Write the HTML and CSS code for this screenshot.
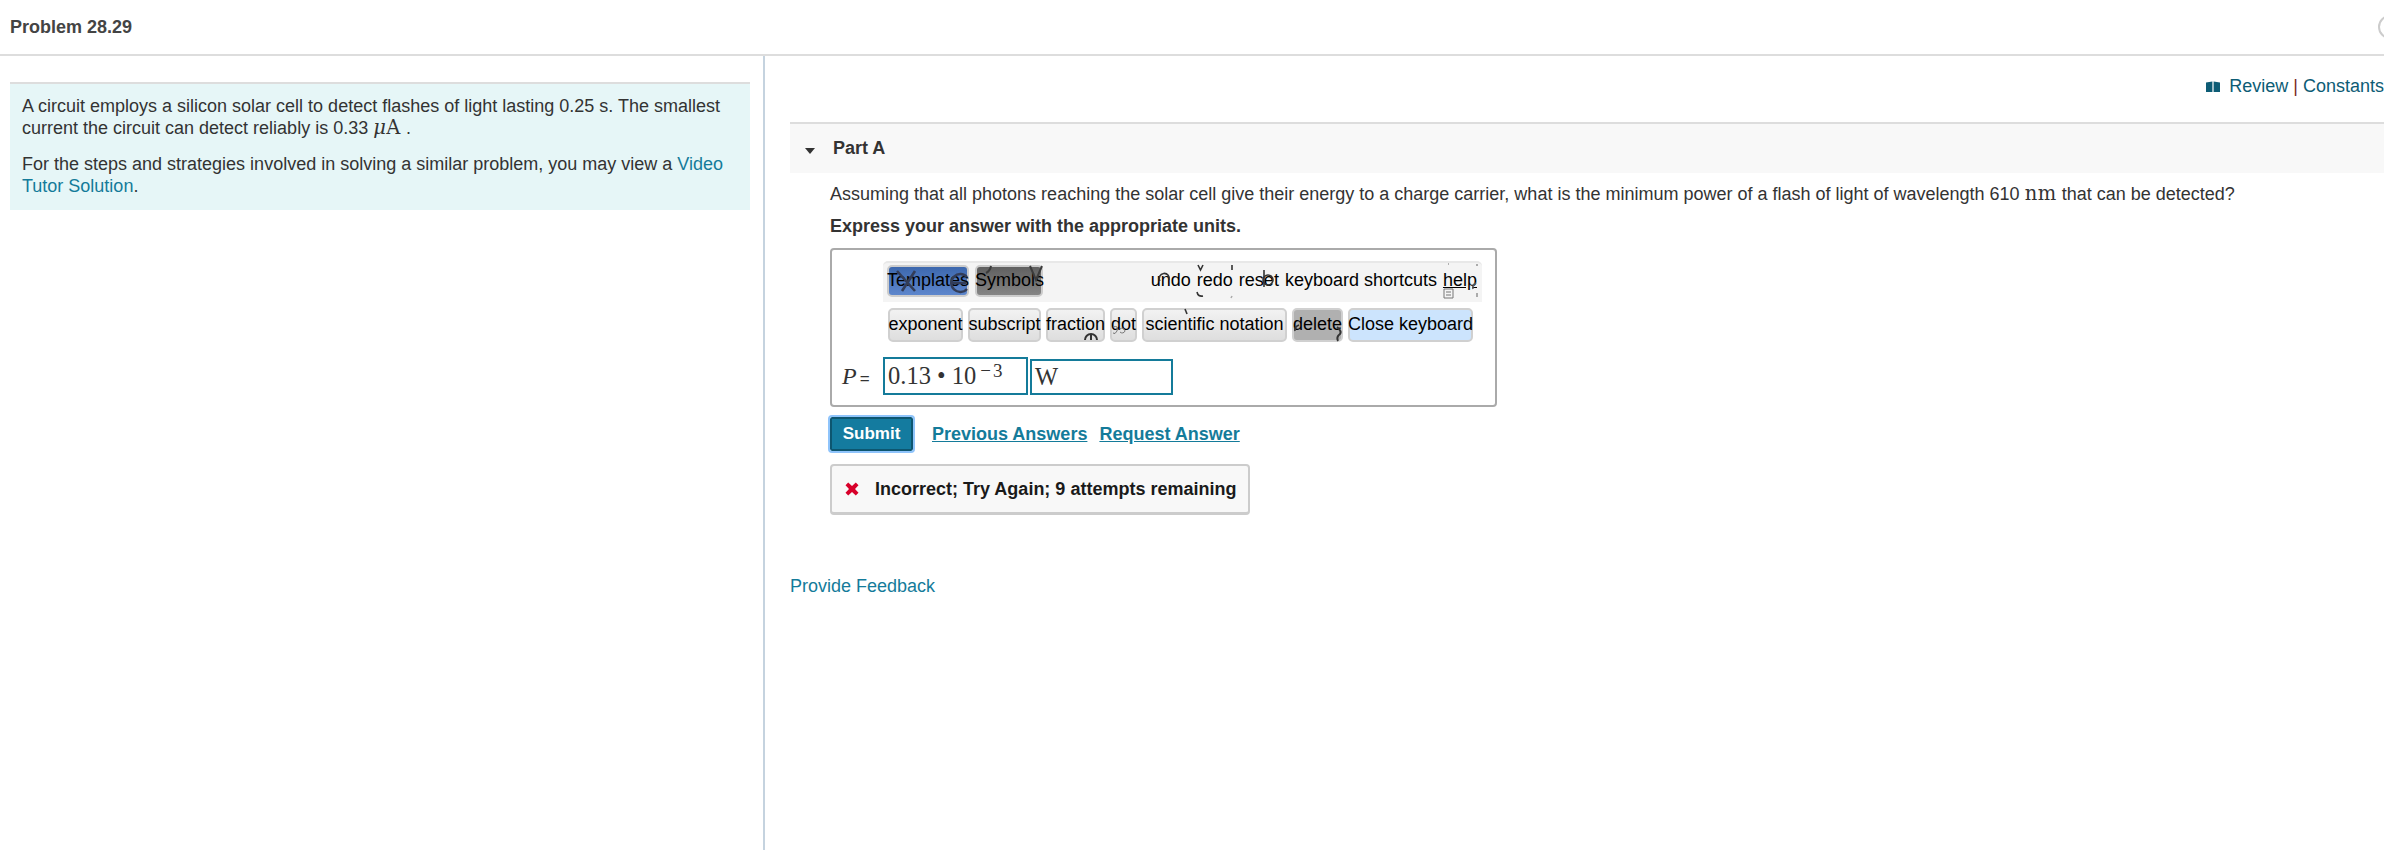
FILE: index.html
```html
<!DOCTYPE html>
<html lang="en">
<head>
    <meta charset="UTF-8">
    <title>Problem 28.29</title>
    <link rel="stylesheet" href="styles.css">
</head>
<body>

<!-- Page header -->
<header class="page-header">
    <h1>Problem 28.29</h1>
    <span class="header-circle"></span>
</header>

<div class="main">
    <!-- Problem text -->
    <aside class="left-col">
        <div class="intro">
            <p>A circuit employs a silicon solar cell to detect flashes of light lasting 0.25 s. The smallest current the circuit can detect reliably is 0.33 <span class="math"><i>&mu;</i>A</span> .</p>
            <p>For the steps and strategies involved in solving a similar problem, you may view a <a href="#">Video Tutor Solution</a>.</p>
        </div>
    </aside>

    <section class="right-col">
        <div class="resources">
            <svg class="book" width="14" height="11" viewBox="0 0 14 11"><path d="M0 1.5 L6.4 0.5 V11 L0 11 Z M7.6 0.5 L14 1.5 V11 H7.6 Z" fill="#0d5c75"/></svg>
            <a href="#">Review</a> <span class="sep">|</span> <a href="#">Constants</a>
        </div>

        <div class="part-head">
            <svg class="caret" width="10" height="6" viewBox="0 0 10 6"><path d="M0 0 H10 L5 6 Z" fill="#333"/></svg>
            <h2>Part A</h2>
        </div>

        <div class="part-body">
            <p class="question">Assuming that all photons reaching the solar cell give their energy to a charge carrier, what is the minimum power of a flash of light of wavelength 610 <span class="math">nm</span> that can be detected?</p>
            <p class="instruct">Express your answer with the appropriate units.</p>

            <!-- Answer editor -->
            <div class="editor">
                <div class="toolbar">
                    <button class="tb-btn templates">Templates</button>
                    <button class="tb-btn symbols">Symbols</button>
                    <div class="tb-links">
                        <span>undo</span>
                        <span>redo</span>
                        <span>reset</span>
                        <span>keyboard shortcuts</span>
                        <span class="l-help">help</span>
                    </div>
                </div>
                <div class="keys">
                    <button class="key k-exp">exponent</button>
                    <button class="key k-sub">subscript</button>
                    <button class="key k-frac">fraction</button>
                    <button class="key k-dot">dot</button>
                    <button class="key k-sci">scientific notation</button>
                    <button class="key k-del">delete</button>
                    <button class="key k-close">Close keyboard</button>
                </div>
                <div class="answer-row">
                    <span class="var"><i>P</i><small>=</small></span>
                    <div class="box box-value">0.13 &bull; 10<sup>&minus;3</sup></div>
                    <div class="box box-unit">W</div>
                </div>

                <svg class="icon-bits" width="663" height="155" viewBox="832 250 663 155" fill="none" stroke="#333" stroke-width="1.6">
                    <path d="M897 271 L915 291 M915 271 L902 291" stroke="#333d58" stroke-width="2.6"/>
                    <path d="M967 277 A9 9 0 1 0 967 289 M950 283 H966" stroke="#333d58" stroke-width="2.4"/>
                    <path d="M991 266 Q990 271 986 273" stroke="#3c3c3c" stroke-width="2"/>
                    <path d="M1030 266 L1036 280 L1042 266" stroke="#3c3c3c" stroke-width="2"/>
                    <path d="M1160 281 A5 5 0 1 1 1169 280"/>
                    <path d="M1198 265 L1200.5 270 L1203 265"/>
                    <path d="M1232 265 V270"/>
                    <path d="M1197 292 Q1198 297 1203 296"/>
                    <path d="M1232 296 L1231 298" stroke="#aaa"/>
                    <path d="M1264 270 V287"/>
                    <circle cx="1268" cy="280" r="5"/>
                    <path d="M1185 309 L1187 314"/>
                    <path d="M1444 289 H1453 V298 H1444 Z M1446 292 H1451 M1446 295 H1451" stroke="#777" stroke-width="1"/>
                    <path d="M1448 264 H1449 M1477 264 V266 M1477 293 V297" stroke="#999"/>
                    <path d="M1476 283 Q1472 285 1473 289" stroke="#555"/>
                    <path d="M1085 340 A6 6 0 0 1 1097 340 M1091 334 V340" stroke="#333" stroke-width="2"/>
                    <path d="M1113 327 Q1119 325 1117 331 Q1115 335 1113 333 M1120 329 A3 3 0 0 1 1125 331 A3 3 0 0 1 1120 332" stroke="#777" stroke-width="1"/>
                    <path d="M1299 325 Q1294 327 1295 331"/>
                    <path d="M1337 327 Q1342 331 1340 334 Q1336 337 1338 341" stroke-width="2"/>
                </svg>
            </div>

            <div class="actions">
                <button class="submit">Submit</button>
                <a href="#" class="act-link first">Previous Answers</a>
                <a href="#" class="act-link">Request Answer</a>
            </div>

            <div class="feedback">
                <svg width="14" height="14" viewBox="0 0 14 14"><path d="M0.5 3.2 L3.2 0.5 L7 4 L10.8 0.5 L13.5 3.2 L10 7 L13.5 10.8 L10.8 13.5 L7 10 L3.2 13.5 L0.5 10.8 L4 7 Z" fill="#d8002a"/></svg>
                <span>Incorrect; Try Again; 9 attempts remaining</span>
            </div>
        </div>

        <a href="#" class="provide">Provide Feedback</a>
    </section>
</div>

</body>
</html>
```

FILE: styles.css
```css
html, body {
    margin: 0;
    height: 850px;
    overflow: hidden;
}

body {
    font-family: "Liberation Sans", Arial, sans-serif;
    font-size: 18px;
    color: #333;
    background: #fff;
}

a {
    color: #147b9a;
    text-decoration: none;
}

p {
    margin: 0;
}

.math {
    font-family: "DejaVu Serif", serif;
    font-size: 19.5px;
    line-height: 0;
    letter-spacing: 0.5px;
}

/* Header */
.page-header {
    height: 54px;
    border-bottom: 2px solid #ddd;
    display: flex;
    align-items: center;
    justify-content: space-between;
    padding-left: 10px;
    overflow: hidden;
}

.page-header h1 {
    margin: 0;
    font-size: 18px;
    color: #444;
}

.header-circle {
    flex: none;
    width: 24px;
    height: 24px;
    margin-right: -18px;
    border: 2px solid #ccc;
    border-radius: 50%;
    box-sizing: border-box;
}

.main {
    display: flex;
    height: 794px;
}

/* Left column */
.left-col {
    width: 765px;
    flex: none;
    box-sizing: border-box;
    padding: 26px 13px 0 10px;
    border-right: 2px solid #c5d3df;
}

.intro {
    background: #e6f6f7;
    border-top: 2px solid #ddd;
    padding: 11px 12px 13px 12px;
    line-height: 22px;
}

.intro p + p {
    margin-top: 14px;
}

/* Right column */
.right-col {
    flex: 1;
    min-width: 0;
    padding-left: 25px;
    overflow: hidden;
}

.resources {
    height: 66px;
    box-sizing: border-box;
    padding-top: 19px;
    line-height: 22px;
    text-align: right;
    white-space: nowrap;
    color: #7a2a1a;
}

.resources a {
    color: #0d5c75;
}

.book {
    margin-right: 4px;
}

.part-head {
    height: 49px;
    border-top: 2px solid #ddd;
    background: #f8f8f8;
    display: flex;
    align-items: center;
    padding-left: 15px;
}

.caret {
    margin-top: 4px;
}

.part-head h2 {
    margin: 0 0 0 18px;
    font-size: 18px;
}

.part-body {
    padding-left: 40px;
}

.question {
    margin-top: 8px;
    line-height: 26px;
}

.instruct {
    margin-top: 6px;
    line-height: 26px;
    font-weight: bold;
}

/* Editor */
.editor {
    position: relative;
    width: 667px;
    height: 159px;
    box-sizing: border-box;
    margin-top: 9px;
    border: 2px solid #aaa;
    border-radius: 4px;
    padding: 11px 0 0 51px;
}

.icon-bits {
    position: absolute;
    left: 0;
    top: 0;
    pointer-events: none;
}

.toolbar {
    width: 599px;
    height: 41px;
    box-sizing: border-box;
    display: flex;
    padding: 2px 0 0 4px;
    gap: 6px;
    background: #f4f4f4;
    border-top: 2px solid #e8e8e8;
    border-radius: 5px 5px 0 0;
}

button {
    font-family: "Liberation Sans", Arial, sans-serif;
    font-size: 18px;
    color: #000;
    padding: 0;
    white-space: nowrap;
}

.tb-btn {
    height: 32px;
    border: 2px solid #ccc;
    border-radius: 5px;
    padding-bottom: 1px;
    text-indent: -2px;
}

.templates {
    width: 82px;
    background: linear-gradient(#3d68ae, #5d86cc);
}

.symbols {
    width: 68px;
    background: linear-gradient(#606060, #858585);
}

.tb-links {
    flex: 1;
    display: flex;
    justify-content: flex-end;
    gap: 6px;
    padding: 4px 5px 0 0;
    line-height: 22px;
    color: #000;
    white-space: nowrap;
}

.l-help {
    text-decoration: underline;
}

.keys {
    display: flex;
    gap: 5px;
    margin: 6px 0 0 5px;
}

.key {
    height: 34px;
    border: 2px solid #d0d0d0;
    border-radius: 5px;
    background: linear-gradient(#f2f2f2, #dedede);
    display: flex;
    align-items: center;
    justify-content: center;
    padding-bottom: 2px;
}

.k-exp { width: 75px; }
.k-sub { width: 73px; }
.k-frac { width: 59px; }
.k-dot { width: 27px; }
.k-sci { width: 145px; }
.k-del { width: 51px; background: #b0b0b0; }
.k-close { width: 125px; background: #cce4fd; }

.answer-row {
    display: flex;
    align-items: center;
    margin: 15px 0 0 -41px;
    font-family: "Liberation Serif", serif;
}

.var {
    width: 41px;
    font-size: 24px;
    white-space: nowrap;
}

.var small {
    font-family: "Liberation Sans", sans-serif;
    font-size: 17px;
    margin-left: 3px;
}

.box {
    box-sizing: border-box;
    border: 2px solid #147b9a;
    font-size: 24.5px;
    padding-left: 3px;
    line-height: 34px;
}

.box sup {
    font-size: 19px;
    line-height: 0;
    vertical-align: 7px;
    margin-left: 4px;
    letter-spacing: 2px;
}

.box-value {
    width: 145px;
    height: 38px;
}

.box-unit {
    width: 143px;
    height: 36px;
    margin: 2px 0 0 2px;
    line-height: 32px;
}

/* Submit and links */
.actions {
    display: flex;
    align-items: center;
    margin-top: 10px;
}

.submit {
    width: 83px;
    height: 34px;
    box-sizing: border-box;
    background: #147b9f;
    color: #fff;
    font-size: 17px;
    font-weight: bold;
    border: 2px solid #0d5670;
    border-radius: 2px;
    outline: 2px solid #8fc4fb;
}

.act-link {
    font-weight: bold;
    text-decoration: underline;
    margin-left: 12px;
}

.act-link.first {
    margin-left: 19px;
}

.feedback {
    width: 420px;
    height: 51px;
    box-sizing: border-box;
    margin-top: 13px;
    border: 2px solid #ccc;
    border-bottom-width: 3px;
    border-radius: 4px;
    background: #f8f8f8;
    display: flex;
    align-items: center;
    padding-left: 13px;
    gap: 16px;
    font-weight: bold;
    color: #1a1a1a;
    white-space: nowrap;
}

.provide {
    display: block;
    margin-top: 60px;
    line-height: 22px;
}
```
